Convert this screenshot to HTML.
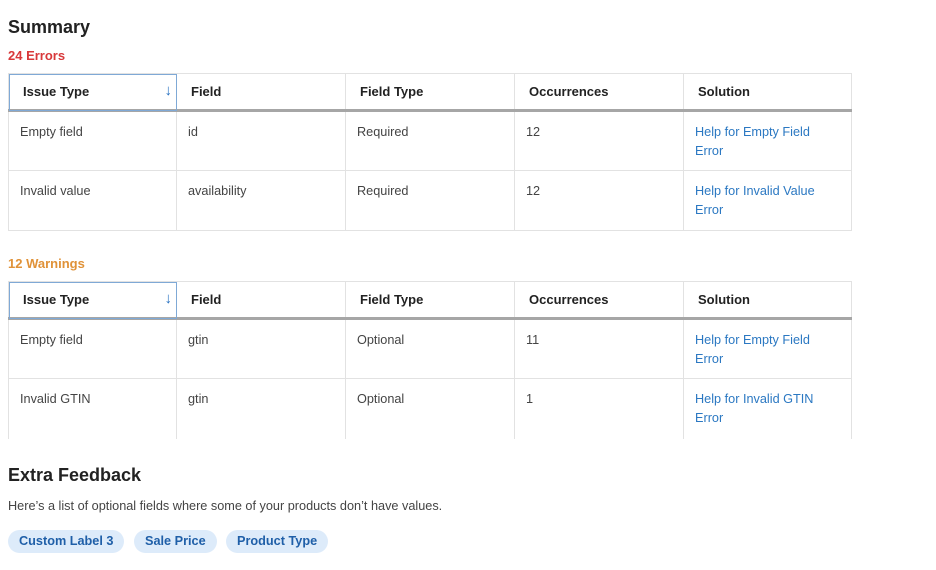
<!DOCTYPE html>
<html><head><style>
body{margin:0;background:#fff;font-family:"Liberation Sans",Arial,sans-serif;width:936px;height:570px;overflow:hidden;position:relative}
.a{position:absolute}
h1{position:absolute;margin:0;font-size:18px;font-weight:bold;color:#222;left:8px}
.cnt{position:absolute;left:8px;font-size:13px;font-weight:bold}
table{position:absolute;left:8px;border-collapse:collapse;width:843px;table-layout:fixed}
th{height:35px;text-align:left;font-size:13px;font-weight:bold;color:#222;padding:0 0 0 14px;border:1px solid #e2e2e2;border-bottom:3px solid #a6a6a6;position:relative}
th.s{outline:1px solid #7fa9d6;outline-offset:-1px}
th.s span{position:absolute;right:4px;top:8px;color:#2670c0;font-size:15px;font-weight:normal}
td{height:60px;vertical-align:top;padding:11px 30px 0 11px;font-size:12.7px;color:#444;border:1px solid #e2e2e2;line-height:19px;box-sizing:border-box}
td a{color:#2b78c2;text-decoration:none}
table.t2 tr:last-child td{border-bottom:none}
.chip{position:absolute;top:530px;height:23px;line-height:23px;background:#ddebfa;color:#1f5fa8;font-weight:bold;font-size:12.7px;border-radius:12px;padding:0 11px}
</style></head><body>
<h1 style="top:17px">Summary</h1>
<div class="cnt" style="top:48px;color:#d8383a">24 Errors</div>
<table style="top:73px">
<colgroup><col style="width:168px"><col style="width:169px"><col style="width:169px"><col style="width:169px"><col style="width:168px"></colgroup>
<tr><th class="s">Issue Type<span>&#8595;</span></th><th>Field</th><th>Field Type</th><th>Occurrences</th><th>Solution</th></tr>
<tr><td>Empty field</td><td>id</td><td>Required</td><td>12</td><td><a>Help for Empty Field Error</a></td></tr>
<tr><td>Invalid value</td><td>availability</td><td>Required</td><td>12</td><td><a>Help for Invalid Value Error</a></td></tr>
</table>
<div class="cnt" style="top:256px;color:#e09238">12 Warnings</div>
<table class="t2" style="top:281px">
<colgroup><col style="width:168px"><col style="width:169px"><col style="width:169px"><col style="width:169px"><col style="width:168px"></colgroup>
<tr><th class="s">Issue Type<span>&#8595;</span></th><th>Field</th><th>Field Type</th><th>Occurrences</th><th>Solution</th></tr>
<tr><td>Empty field</td><td>gtin</td><td>Optional</td><td>11</td><td><a>Help for Empty Field Error</a></td></tr>
<tr><td>Invalid GTIN</td><td>gtin</td><td>Optional</td><td>1</td><td><a>Help for Invalid GTIN Error</a></td></tr>
</table>
<h1 style="top:465px">Extra Feedback</h1>
<div class="a" style="left:8px;top:499px;font-size:12.7px;color:#444">Here’s a list of optional fields where some of your products don’t have values.</div>
<div class="chip" style="left:8px">Custom Label 3</div>
<div class="chip" style="left:134px">Sale Price</div>
<div class="chip" style="left:226px">Product Type</div>
</body></html>
